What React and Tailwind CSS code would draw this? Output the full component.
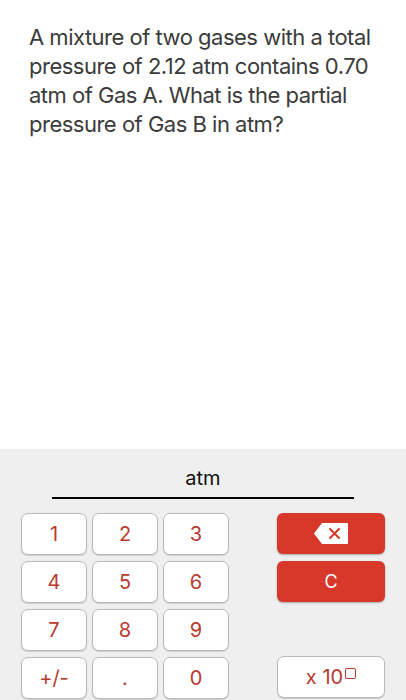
import React from 'react';

const digitRows = [
  ['1', '2', '3'],
  ['4', '5', '6'],
  ['7', '8', '9'],
  ['+/-', '.', '0'],
];

const KeyButton = ({ label }) => (
  <button className="w-[66px] h-[42px] rounded-[7px] bg-white border border-[#b9b9b9] shadow-[0_1px_1px_rgba(0,0,0,0.15)] text-[20px] text-[#b83a2e] flex items-center justify-center">
    {label}
  </button>
);

const BackspaceIcon = () => (
  <svg width="36" height="23" viewBox="0 0 36 23">
    <path d="M9 1 H34 a1 1 0 0 1 1 1 V21 a1 1 0 0 1 -1 1 H9 L1 11.5 Z" fill="#ffffff" />
    <path d="M17 7 L26 16 M26 7 L17 16" stroke="#d8382a" strokeWidth="2" strokeLinecap="round" />
  </svg>
);

const App = () => {
  return (
    <div className="w-[406px] h-[700px] bg-white flex flex-col" style={{ fontFamily: 'Inter, "Liberation Sans", sans-serif' }}>
      {/* Question */}
      <div className="pl-[29px] pr-[24px] pt-[23px] flex-1">
        <p className="text-[22px] leading-[29px] text-[#3b3b3b] tracking-[-0.5px]">
          A mixture of two gases with a total pressure of 2.12 atm contains 0.70 atm of Gas A. What is the partial pressure of Gas B in atm?
        </p>
      </div>

      {/* Keypad */}
      <div className="h-[251px] bg-[#efefef] flex flex-col">
        <div className="mx-[52px] mt-[17px] h-[33px] border-b-2 border-black flex items-start justify-center">
          <span className="text-[20px] leading-[24px] text-[#111]">atm</span>
        </div>

        <div className="flex mt-[14px] pl-[21px]">
          <div className="flex flex-col gap-[6px]">
            {digitRows.map((row, i) => (
              <div key={i} className="flex gap-[5px]">
                {row.map((d) => (
                  <KeyButton key={d} label={d} />
                ))}
              </div>
            ))}
          </div>

          <div className="ml-[48px] flex flex-col">
            <button className="w-[108px] h-[41px] rounded-[6px] bg-[#d8382a] shadow-[0_1px_2px_rgba(0,0,0,0.3)] flex items-center justify-center">
              <BackspaceIcon />
            </button>
            <button className="mt-[7px] w-[108px] h-[41px] rounded-[6px] bg-[#d8382a] shadow-[0_1px_2px_rgba(0,0,0,0.3)] text-[18px] text-white flex items-center justify-center">
              C
            </button>
            <button className="mt-[54px] w-[108px] h-[42px] rounded-[7px] bg-white border border-[#b9b9b9] shadow-[0_1px_1px_rgba(0,0,0,0.15)] text-[20px] text-[#b83a2e] flex items-center justify-center">
              <span>x 10</span>
              <span className="ml-[2px] mb-[8px] w-[11px] h-[11px] border-[1.5px] border-[#b83a2e] rounded-[2px]" />
            </button>
          </div>
        </div>
      </div>
    </div>
  );
};

export default App;
